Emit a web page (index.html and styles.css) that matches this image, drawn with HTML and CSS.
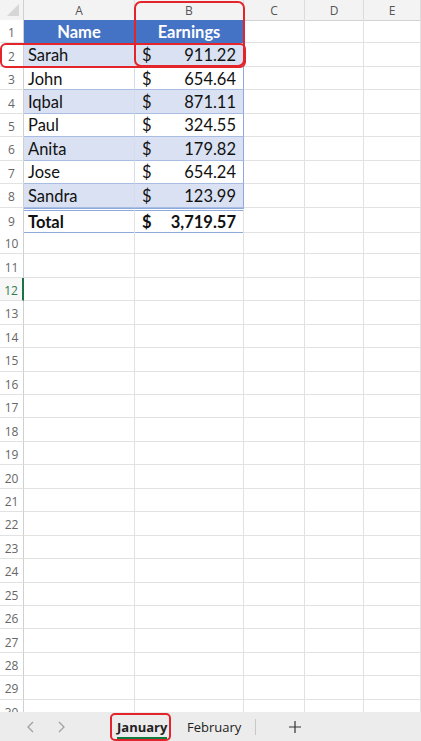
FILE: index.html
```html
<!DOCTYPE html>
<html>
<head>
<meta charset="utf-8">
<link rel="stylesheet" href="styles.css">
</head>
<body>
<div class="app">
  <div class="sheet">
    <div class="row colhead">
      <span class="corner"><svg width="24" height="20" viewBox="0 0 24 20"><polygon points="19,4 19,16 7,16" fill="#d6d6d6"/></svg></span>
      <span class="ch">A</span><span class="ch">B</span><span class="ch">C</span><span class="ch">D</span><span class="ch">E</span>
    </div>
    <div class="row"><span class="rh">1</span><span class="c th">Name</span><span class="c th">Earnings</span><i></i><i></i><i></i></div>
    <div class="row band"><span class="rh">2</span><span class="c ta">Sarah</span><span class="c tb"><span>$</span><span>911.22</span></span><i></i><i></i><i></i></div>
    <div class="row plain"><span class="rh">3</span><span class="c ta">John</span><span class="c tb"><span>$</span><span>654.64</span></span><i></i><i></i><i></i></div>
    <div class="row band"><span class="rh">4</span><span class="c ta">Iqbal</span><span class="c tb"><span>$</span><span>871.11</span></span><i></i><i></i><i></i></div>
    <div class="row plain"><span class="rh">5</span><span class="c ta">Paul</span><span class="c tb"><span>$</span><span>324.55</span></span><i></i><i></i><i></i></div>
    <div class="row band"><span class="rh">6</span><span class="c ta">Anita</span><span class="c tb"><span>$</span><span>179.82</span></span><i></i><i></i><i></i></div>
    <div class="row plain"><span class="rh">7</span><span class="c ta">Jose</span><span class="c tb"><span>$</span><span>654.24</span></span><i></i><i></i><i></i></div>
    <div class="row band"><span class="rh">8</span><span class="c ta">Sandra</span><span class="c tb"><span>$</span><span>123.99</span></span><i></i><i></i><i></i></div>
    <div class="row total"><span class="rh">9</span><span class="c ta">Total</span><span class="c tb"><span>$</span><span>3,719.57</span></span><i></i><i></i><i></i></div>
    <div class="row"><span class="rh">10</span><i></i><i></i><i></i><i></i><i></i></div>
    <div class="row"><span class="rh">11</span><i></i><i></i><i></i><i></i><i></i></div>
    <div class="row active"><span class="rh">12</span><i></i><i></i><i></i><i></i><i></i></div>
    <div class="row"><span class="rh">13</span><i></i><i></i><i></i><i></i><i></i></div>
    <div class="row"><span class="rh">14</span><i></i><i></i><i></i><i></i><i></i></div>
    <div class="row"><span class="rh">15</span><i></i><i></i><i></i><i></i><i></i></div>
    <div class="row"><span class="rh">16</span><i></i><i></i><i></i><i></i><i></i></div>
    <div class="row"><span class="rh">17</span><i></i><i></i><i></i><i></i><i></i></div>
    <div class="row"><span class="rh">18</span><i></i><i></i><i></i><i></i><i></i></div>
    <div class="row"><span class="rh">19</span><i></i><i></i><i></i><i></i><i></i></div>
    <div class="row"><span class="rh">20</span><i></i><i></i><i></i><i></i><i></i></div>
    <div class="row"><span class="rh">21</span><i></i><i></i><i></i><i></i><i></i></div>
    <div class="row"><span class="rh">22</span><i></i><i></i><i></i><i></i><i></i></div>
    <div class="row"><span class="rh">23</span><i></i><i></i><i></i><i></i><i></i></div>
    <div class="row"><span class="rh">24</span><i></i><i></i><i></i><i></i><i></i></div>
    <div class="row"><span class="rh">25</span><i></i><i></i><i></i><i></i><i></i></div>
    <div class="row"><span class="rh">26</span><i></i><i></i><i></i><i></i><i></i></div>
    <div class="row"><span class="rh">27</span><i></i><i></i><i></i><i></i><i></i></div>
    <div class="row"><span class="rh">28</span><i></i><i></i><i></i><i></i><i></i></div>
    <div class="row"><span class="rh">29</span><i></i><i></i><i></i><i></i><i></i></div>
    <div class="row"><span class="rh">30</span><i></i><i></i><i></i><i></i><i></i></div>
    <div class="mark mark-col"></div>
    <div class="mark mark-row"></div>
  </div>
  <div class="tabs">
    <div class="nav">
      <svg width="10" height="14" viewBox="0 0 10 14"><polyline points="7,2 2,7 7,12" fill="none" stroke="#a0a0a0" stroke-width="1.3"/></svg>
      <svg width="10" height="14" viewBox="0 0 10 14"><polyline points="3,2 8,7 3,12" fill="none" stroke="#a0a0a0" stroke-width="1.3"/></svg>
    </div>
    <div class="tab current"><span>January</span></div>
    <div class="tab">February</div>
    <span class="sep"></span>
    <span class="add">
      <svg width="14" height="14" viewBox="0 0 14 14"><path d="M7 1V13M1 7H13" stroke="#333" stroke-width="1.2"/></svg>
    </span>
  </div>
</div>
</body>
</html>
```
FILE: styles.css
```css
* { box-sizing: border-box; }
html, body { margin: 0; padding: 0; }
body {
  width: 421px;
  height: 741px;
  overflow: hidden;
  background: #fff;
  font-family: Lato, "Open Sans", sans-serif;
}
.app {
  display: flex;
  flex-direction: column;
  height: 741px;
}
.sheet {
  position: relative;
  flex: 1;
  overflow: hidden;
}
.row {
  display: grid;
  grid-template-columns: 24px 111px 109px 61px 59px 57px;
  height: 23.45px;
}
.row > * {
  border-bottom: 1px solid #e2e2e2;
  border-right: 1px solid #e2e2e2;
}
.rh {
  display: flex;
  align-items: center;
  justify-content: center;
  font-family: "Open Sans", sans-serif;
  font-size: 12px;
  color: #666;
  border-right: 1px solid #d0d0d0 !important;
  background: #fff;
  padding-top: 3px;
}
.colhead {
  height: 20px;
  background: #f3f3f3;
}
.colhead > * {
  border-bottom: 1px solid #d2d2d2;
  border-right: 1px solid #dcdcdc;
}
.corner { display: block; line-height: 0; border-right: 1px solid #d0d0d0; }
.ch {
  display: flex;
  align-items: center;
  justify-content: center;
  font-family: "Open Sans", sans-serif;
  font-size: 12px;
  color: #555;
  padding-top: 1px;
}
.c {
  display: flex;
  align-items: center;
  font-size: 16.5px;
  color: #111;
  white-space: nowrap;
  padding-top: 1px;
}
.th {
  background: #4472c4;
  color: #fff;
  font-weight: 700;
  justify-content: center;
  border-right: 1px solid #4472c4;
  border-bottom: 1px solid #4472c4;
}
.ta { padding-left: 4px; }
.tb {
  justify-content: space-between;
  padding-left: 7px;
  padding-right: 7px;
}
.band .c { background: #d9e1f2; }
.band .c, .plain .c {
  border-bottom: 1px solid #a9bde3;
  border-right: 1px solid #d6dce8;
}
.band .tb, .plain .tb, .total .tb { border-right: 1px solid #8eaadb; }
.total .c {
  font-weight: 700;
  border-top: 3px double #8eaadb;
  border-bottom: 1px solid #8eaadb;
  border-right: 1px solid #e2e2e2;
}
.active .rh {
  color: #2f7d4c;
  border-right: 2px solid #1e7145 !important;
  background: #f7f7f7;
}
.mark {
  position: absolute;
  border: 2px solid #e3242b;
  border-radius: 7px;
  pointer-events: none;
}
.mark-col { left: 134px; top: 1px; width: 111px; height: 66px; }
.mark-row { left: 0; top: 43px; width: 246px; height: 25px; border-radius: 6px; }
.tabs {
  height: 29px;
  flex: none;
  background: #ececec;
  display: flex;
  align-items: center;
  font-family: "Open Sans", sans-serif;
  font-size: 13px;
  color: #222;
}
.nav {
  display: flex;
  gap: 20px;
  padding-left: 26px;
  width: 110px;
}
.nav svg { display: block; }
.tab {
  height: 28px;
  display: flex;
  align-items: center;
  padding: 0 14px 0 16px;
}
.tab.current {
  border: 2px solid #e3242b;
  border-radius: 5px;
  padding: 0 5px;
  font-weight: 700;
  width: 61px;
}
.tab.current span {
  border-bottom: 2px solid #107c41;
  line-height: 19px;
  padding-top: 3px;
}
.sep {
  width: 1px;
  height: 16px;
  background: #c8c8c8;
}
.add {
  display: flex;
  margin-left: 32px;
}
.add svg { display: block; }
```
